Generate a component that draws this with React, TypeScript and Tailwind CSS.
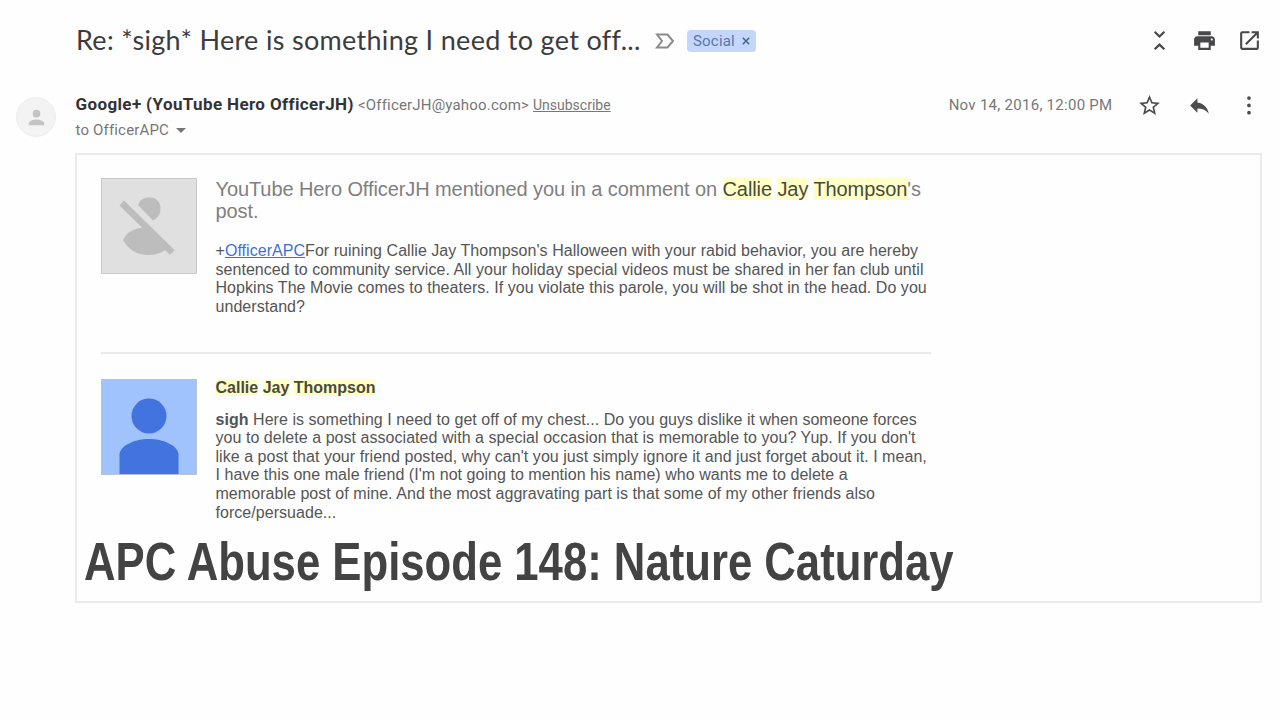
import React from "react";

const toolbarIcons = [
  "M6.600 19.700 8.100 21.200 12 17.400 15.900 21.200l1.500-1.500L12 14.400l-5.400 5.300zm10.800-15.400L15.900 2.800 12 6.600 8.100 2.800 6.600 4.300 12 9.600l5.400-5.300z",
  "M19 8H5c-1.66 0-3 1.34-3 3v6h4v4h12v-4h4v-6c0-1.66-1.34-3-3-3zm-3 11H8v-5h8v5zm3-7c-.55 0-1-.45-1-1s.45-1 1-1 1 .45 1 1-.45 1-1 1zm-1-9H6v4h12V3z",
  "M19 19H5V5h7V3H5a2 2 0 0 0-2 2v14a2 2 0 0 0 2 2h14c1.1 0 2-.9 2-2v-7h-2v7zM14 3v2h3.59l-9.83 9.83 1.41 1.41L19 6.41V10h2V3h-7z",
];

const messageIcons = [
  "M22 9.24l-7.19-.62L12 2 9.19 8.63 2 9.24l5.46 4.73L5.82 21 12 17.27 18.18 21l-1.63-7.03L22 9.24zM12 15.4l-3.76 2.27 1-4.28-3.32-2.88 4.38-.38L12 6.1l1.71 4.04 4.38.38-3.32 2.88 1 4.28L12 15.4z",
  "M10 9V5l-7 7 7 7v-4.1c5 0 8.5 1.6 11 5.1-1-5-4-10-11-11z",
  "M11.500 6.700a1.800 1.800 0 1 0 0-3.600 1.800 1.800 0 0 0 0 3.600zm0 7a1.800 1.800 0 1 0 0-3.600 1.800 1.800 0 0 0 0 3.600zm0 7a1.800 1.800 0 1 0 0-3.600 1.800 1.800 0 0 0 0 3.600z",
];

const Icon: React.FC<{ d: string; className?: string }> = ({ d, className }) => (
  <svg viewBox="0 0 24 24" fill="currentColor" className={className}>
    <path d={d} />
  </svg>
);

const Mark: React.FC<{ children: React.ReactNode }> = ({ children }) => (
  <span className="bg-[#ffffc8] text-[#4a4a3c]">{children}</span>
);

const App: React.FC = () => {
  return (
    <div className="h-[720px] w-[1280px] overflow-hidden bg-[#fefefe] font-['Liberation_Sans',sans-serif] text-[#555]">
      {/* Subject */}
      <header className="flex h-[82px] items-center pl-[76px] pr-[18px]">
        <h1 className="w-[579px] whitespace-nowrap pb-0.5 font-['Lato',sans-serif] text-[27px] tracking-[0.310px] text-[#3c3c3f]">
          Re: *sigh* Here is something I need to get off...
        </h1>
        <svg viewBox="0 0 20 16" className="h-4 w-5 fill-none stroke-[#8a8a8a] stroke-2">
          <path d="M2 1.5h10.5L18 8l-5.500 6.500H2L7 8z" />
        </svg>
        <div className="ml-3 flex h-[22px] w-[69px] items-center justify-between rounded bg-[#c5d6fb] px-1.5 font-['Roboto',sans-serif] text-[15px] tracking-[0.200px] text-[#5676b4]">
          <span>Social</span>
          <svg viewBox="0 0 10 10" className="h-2 w-2 stroke-[#45659f] stroke-2">
            <path d="M1 1l8 8M9 1l-8 8" />
          </svg>
        </div>
        <div className="ml-auto flex gap-5 pb-px text-[#48484a]">
          {toolbarIcons.map((d) => (
            <Icon key={d} d={d} className="h-[25px] w-[25px]" />
          ))}
        </div>
      </header>

      {/* Sender */}
      <section className="flex h-[71px] pl-4 pr-[18px] font-['Roboto',sans-serif] text-[#777]">
        <div className="mt-[15px] flex h-10 w-10 items-center justify-center rounded-full border border-[#eee] bg-[#f3f3f3] text-[#c4c4c4]">
          <Icon d="M12 12a4 4 0 1 0 0-8 4 4 0 0 0 0 8zm0 2c-2.670 0-8 1.340-8 4v2h16v-2c0-2.660-5.330-4-8-4z" className="h-[23px] w-[23px]" />
        </div>
        <div className="ml-[19.5px] mt-2.5 flex-1 whitespace-nowrap">
          <div className="flex h-[26px] items-center">
            <span className="w-[282.5px] text-[17px] font-bold tracking-[0.370px] text-[#333336]">Google+ (YouTube Hero OfficerJH)</span>
            <span className="w-[175px] text-[15px] tracking-[0.180px]">&lt;OfficerJH@yahoo.com&gt;</span>
            <span className="text-[14px] underline">Unsubscribe</span>
          </div>
          <div className="flex h-6 items-center">
            <span className="text-[15px] tracking-[0.170px]">to OfficerAPC</span>
            <svg viewBox="0 0 10 5" className="ml-[7px] h-[5px] w-2.5 fill-[#777]">
              <path d="M0 0h10L5 5z" />
            </svg>
          </div>
        </div>
        <div className="mt-2.5 flex h-[26px] items-center whitespace-nowrap text-[#4c4c4c]">
          <span className="mr-[24.5px] text-[15px] tracking-[0.280px] text-[#777]">Nov 14, 2016, 12:00 PM</span>
          <div className="flex gap-[25px]">
            {messageIcons.map((d) => (
              <Icon key={d} d={d} className="h-[25px] w-[25px]" />
            ))}
          </div>
        </div>
      </section>

      {/* Message body */}
      <main className="ml-[75px] h-[450px] w-[1187px] border-2 border-[#ebebeb] pl-6 pt-[23px]">
        <article className="flex h-[176px] w-[830px] border-b-2 border-[#e9e9e9]">
          <svg viewBox="0 0 96 96" className="h-24 w-24 shrink-0">
            <path d="M.5.5h95v95H.5z" fill="#e0e0e0" stroke="#c8c8c8" />
            <g fill="#bdbdbd">
              <path d="M37 27C40 16.500 58 16 59.500 29Q60.500 38 52 42.500z" />
              <path d="M22 62Q28 50 44 49.500L66 71Q58 77 47 77Q31 77 22 62z" />
              <path d="M18.500 27.500l4.500-5 50.500 49.500-4.500 5z" />
            </g>
          </svg>
          <div className="ml-[18.5px] whitespace-nowrap">
            <div className="text-[20px] leading-[22px] tracking-[-0.090px] text-[#808080]">
              <p>
                YouTube Hero OfficerJH mentioned you in a comment on <Mark>Callie</Mark> <Mark>Jay</Mark> <Mark>Thompson</Mark>'s
              </p>
              <p>post.</p>
            </div>
            <div className="mt-5 text-[16px] leading-[18.600px] tracking-[0.045px]">
              <p>
                +<span className="text-[#3e6fd9] underline">OfficerAPC</span>For ruining Callie Jay Thompson's Halloween with your rabid behavior, you are hereby
              </p>
              <p>sentenced to community service. All your holiday special videos must be shared in her fan club until</p>
              <p>Hopkins The Movie comes to theaters. If you violate this parole, you will be shot in the head. Do you</p>
              <p>understand?</p>
            </div>
          </div>
        </article>

        <article className="mt-[25px] flex h-[150px]">
          <svg viewBox="0 0 96 96" className="h-24 w-24 shrink-0">
            <path d="M.5.5h95v95H.5z" fill="#a0c2fd" stroke="#b9c3d5" />
            <g fill="#4273df">
              <circle cx="48" cy="37" r="17.500" />
              <path d="M18.500 95V75C20 66 34 60 48 60s28 6 29.500 15v20z" />
            </g>
          </svg>
          <div className="ml-[18.5px] whitespace-nowrap text-[16px] leading-[18.600px] tracking-[0.045px]">
            <h2 className="font-bold tracking-normal">
              <Mark>Callie</Mark> <Mark>Jay</Mark> <Mark>Thompson</Mark>
            </h2>
            <div className="mt-[13px]">
              <p>
                <b>sigh</b> Here is something I need to get off of my chest... Do you guys dislike it when someone forces
              </p>
              <p>you to delete a post associated with a special occasion that is memorable to you? Yup. If you don't</p>
              <p>like a post that your friend posted, why can't you just simply ignore it and just forget about it. I mean,</p>
              <p>I have this one male friend (I'm not going to mention his name) who wants me to delete a</p>
              <p>memorable post of mine. And the most aggravating part is that some of my other friends also</p>
              <p>force/persuade...</p>
            </div>
          </div>
        </article>

        <h2 className="-ml-[17px] mt-[3px] origin-left scale-x-[0.824] whitespace-nowrap text-[53px] font-bold leading-[60px] text-[#434343]">
          APC Abuse Episode 148: Nature Caturday
        </h2>
      </main>
    </div>
  );
};

export default App;
